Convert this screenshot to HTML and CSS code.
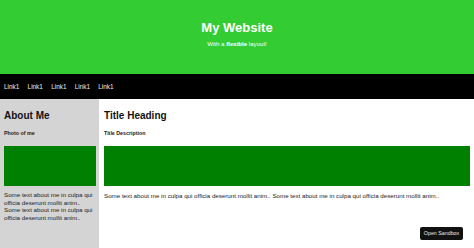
FILE: index.html
```html
<!DOCTYPE html>
<html>
  <head>
    <title>My Website</title>
    <link rel="stylesheet" href="styles.css">
  </head>
  <body>
    <div class="header">
      <h1>My Website</h1>
      <p>With a <b>flexible</b> layout!</p>
    </div>

    <div class="navbar">
      <a href="#">Link1</a>
      <a href="#">Link1</a>
      <a href="#">Link1</a>
      <a href="#">Link1</a>
      <a href="#">Link1</a>
    </div>

    <div class="row">
      <div class="side">
        <h2>About Me</h2>
        <h5>Photo of me</h5>
        <div class="fakeimg"></div>
        <p>Some text about me in culpa qui officia deserunt mollit anim.. Some text about me in culpa qui officia deserunt mollit anim..</p>
      </div>
      <div class="main">
        <h2>Title Heading</h2>
        <h5>Title Description</h5>
        <div class="fakeimg"></div>
        <p class="wide">Some text about me in culpa qui officia deserunt mollit anim.. Some text about me in culpa qui officia deserunt mollit anim..</p>
      </div>
    </div>

    <a class="sandbox" href="#">Open Sandbox</a>
  </body>
</html>
```

FILE: styles.css
```css
* {
  box-sizing: border-box;
}

body {
  font-family: "Liberation Sans", Arial, Helvetica, sans-serif;
  margin: 0;
  color: #1a1a1a;
}

.header {
  height: 74px;
  padding-top: 20px;
  text-align: center;
  background-color: #33cc33;
  color: white;
}

.header h1 {
  margin: 0;
  font-size: 13px;
  line-height: 15px;
}

.header p {
  margin: 5px 0 0;
  font-size: 6.1px;
  line-height: 8px;
}

.navbar {
  height: 25px;
  display: flex;
  align-items: center;
  background-color: #000;
}

.navbar a {
  color: #eee;
  text-decoration: none;
  font-size: 6.4px;
  padding: 0 4px;
  margin-right: 0.3px;
}

.row {
  display: flex;
  min-height: 149px;
}

.side {
  width: 99px;
  flex-shrink: 0;
  background-color: #d4d4d4;
  padding: 11px 3px 10px 4px;
}

.main {
  flex: 1;
  background-color: white;
  padding: 11px 4px 10px 5px;
}

h2 {
  margin: 0;
  font-size: 10px;
  line-height: 12px;
  color: #111;
}

h5 {
  margin: 8px 0 0;
  font-size: 5.3px;
  line-height: 7px;
}

.fakeimg {
  background-color: #008000;
  height: 40px;
  margin-top: 8.5px;
}

.side p,
.main p {
  margin: 5.3px 0 0;
  font-size: 6.2px;
  line-height: 7.7px;
  color: #222;
}

.main p.wide {
  margin-top: 6px;
}

.sandbox {
  position: fixed;
  right: 11px;
  bottom: 8px;
  width: 43px;
  height: 13px;
  line-height: 13px;
  text-align: center;
  background-color: #111;
  color: #eee;
  font-size: 5.3px;
  border-radius: 2px;
  text-decoration: none;
}
```
